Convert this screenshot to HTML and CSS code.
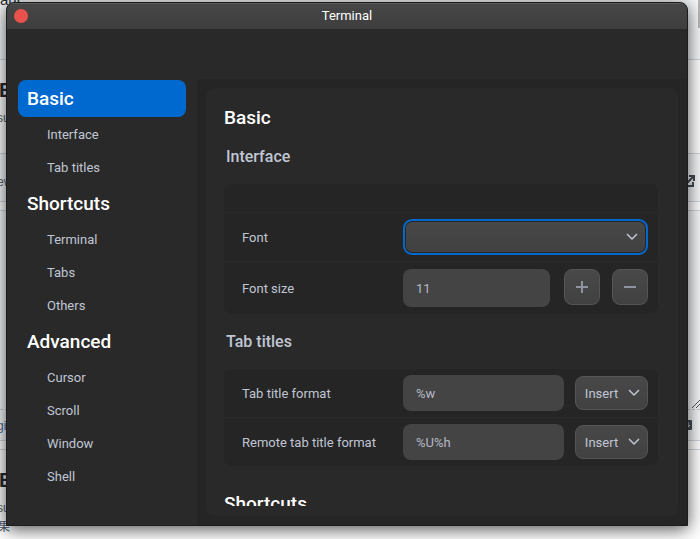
FILE: index.html
```html
<!DOCTYPE html>
<html lang="en">
<head>
  <meta charset="UTF-8">
  <meta name="viewport" content="width=device-width, initial-scale=1.0">
  <title>Terminal</title>
  <link rel="stylesheet" href="styles.css">
</head>
<body>
  <!-- Page behind the window -->
  <div class="desktop" aria-hidden="true">
    <div class="band band-top"><span class="peek peek-tab">aui</span></div>
    <div class="band band-title">
      <span class="peek peek-heading">E</span>
      <span class="peek peek-meta">su</span>
    </div>
    <div class="band band-bar">
      <span class="peek peek-link">ew</span>
      <svg class="peek-icon" width="10" height="12" viewBox="0 0 10 12" fill="none" stroke="#444c56" stroke-width="2">
        <path d="M3 1h5v5M8 1L1 8M0 11h7V7"/>
      </svg>
    </div>
    <div class="editor">
      <div class="editor-text">
        <svg class="grip" width="8" height="8" viewBox="0 0 8 8" stroke="#555" stroke-width="1">
          <path d="M0 8L8 0M4 8L8 4"/>
        </svg>
      </div>
      <div class="editor-foot">
        <span class="peek peek-foot">gi</span>
        <svg class="foot-icon" width="12" height="10" viewBox="0 0 12 10">
          <rect width="12" height="10" rx="1" fill="#444c56"/>
          <path d="M8 2v5M6 5l2 2 2-2" fill="none" stroke="#dfe3e8"/>
        </svg>
      </div>
    </div>
    <div class="band band-next">
      <span class="peek peek-heading">E</span>
      <span class="peek peek-meta">su</span>
      <span class="peek peek-cjk">果</span>
    </div>
    <div class="scrollbar"></div>
  </div>

  <!-- Settings window -->
  <div class="window">
    <header class="titlebar">
      <button class="close" type="button" aria-label="Close"></button>
      <h1>Terminal</h1>
    </header>

    <div class="body">
      <nav class="sidebar">
        <a class="nav-group active" href="#basic">Basic</a>
        <a class="nav-item" href="#interface">Interface</a>
        <a class="nav-item" href="#tab-titles">Tab titles</a>
        <a class="nav-group" href="#shortcuts">Shortcuts</a>
        <a class="nav-item" href="#terminal">Terminal</a>
        <a class="nav-item" href="#tabs">Tabs</a>
        <a class="nav-item" href="#others">Others</a>
        <a class="nav-group" href="#advanced">Advanced</a>
        <a class="nav-item" href="#cursor">Cursor</a>
        <a class="nav-item" href="#scroll">Scroll</a>
        <a class="nav-item" href="#window">Window</a>
        <a class="nav-item" href="#shell">Shell</a>
      </nav>

      <main class="content">
        <div class="panel">
          <div class="panel-scroll">
            <h2 id="basic">Basic</h2>

            <h3 id="interface">Interface</h3>
            <div class="group">
              <div class="row row-empty"></div>
              <div class="row">
                <label for="font">Font</label>
                <div class="controls">
                  <div class="select">
                    <select id="font"><option></option></select>
                    <svg class="chevron" width="12" height="8" viewBox="0 0 12 8"><path d="M1 1l5 5 5-5"/></svg>
                  </div>
                </div>
              </div>
              <div class="row row-size">
                <label for="size">Font size</label>
                <div class="controls spin">
                  <input id="size" type="text" value="11">
                  <button class="btn btn-step" type="button" aria-label="Increase">
                    <svg width="12" height="12" viewBox="0 0 12 12"><path d="M6 0v12M0 6h12"/></svg>
                  </button>
                  <button class="btn btn-step" type="button" aria-label="Decrease">
                    <svg width="12" height="12" viewBox="0 0 12 12"><path d="M0 6h12"/></svg>
                  </button>
                </div>
              </div>
            </div>

            <h3 id="tab-titles">Tab titles</h3>
            <div class="group">
              <div class="row">
                <label for="tab-format">Tab title format</label>
                <div class="controls">
                  <input id="tab-format" type="text" value="%w">
                  <button class="btn btn-insert" type="button">Insert
                    <svg class="chevron" width="12" height="8" viewBox="0 0 12 8"><path d="M1 1l5 5 5-5"/></svg>
                  </button>
                </div>
              </div>
              <div class="row">
                <label for="remote-format">Remote tab title format</label>
                <div class="controls">
                  <input id="remote-format" type="text" value="%U%h">
                  <button class="btn btn-insert" type="button">Insert
                    <svg class="chevron" width="12" height="8" viewBox="0 0 12 8"><path d="M1 1l5 5 5-5"/></svg>
                  </button>
                </div>
              </div>
            </div>

            <h2 id="shortcuts" class="next-section">Shortcuts</h2>
          </div>
        </div>
      </main>
    </div>
  </div>
</body>
</html>
```
FILE: styles.css
```css
* {
  box-sizing: border-box;
}
body {
  margin: 0;
  height: 100vh;
  position: relative;
  overflow: hidden;
  background: #fff;
  color: #c0c6d4;
  font-family: Roboto, sans-serif;
  font-size: 13px;
}

/* Page behind the window */
.desktop {
  position: absolute;
  inset: 0;
  display: flex;
  flex-direction: column;
  overflow: hidden;
  color: #57606a;
  font-family: "Liberation Sans", sans-serif;
  font-size: 12px;
  line-height: 16px;
}
.band {
  position: relative;
  flex: none;
  border-bottom: 1px solid #d0d7de;
}
.band-top {
  height: 60px;
  background: #f6f8fa;
}
.band-title {
  height: 94px;
}
.band-bar {
  height: 48px;
  background: #f6f8fa;
}
.band-next {
  flex: 1;
  margin-top: 8px;
  border-top: 1px solid #d0d7de;
  border-bottom: 0;
}
.editor {
  margin-top: 8px;
  border: 1px solid #d0d7de;
  border-width: 1px 0;
  background: #f6f8fa;
}
.editor-text {
  position: relative;
  height: 199px;
  border-bottom: 1px dashed #c4cad1;
}
.editor-foot {
  position: relative;
  height: 30px;
}
.peek {
  position: absolute;
  left: -3px;
}
.peek-tab {
  top: -8px;
  left: 0;
  color: #24292f;
  font-size: 15px;
}
.peek-heading {
  top: 20px;
  left: -1px;
  color: #24292f;
  font-size: 20px;
  font-weight: bold;
  line-height: 20px;
}
.peek-meta {
  top: 50px;
}
.peek-link {
  top: 20px;
}
.peek-foot {
  top: 8px;
  color: #4f6a94;
}
.peek-cjk {
  top: 68px;
  left: -2px;
  color: #46566e;
  font-family: "Noto Sans CJK SC", sans-serif;
}
.peek-icon {
  position: absolute;
  top: 21px;
  right: 4px;
}
.grip {
  position: absolute;
  right: 0;
  bottom: 1px;
}
.foot-icon {
  position: absolute;
  top: 10px;
  right: 8px;
}
.scrollbar {
  position: absolute;
  top: 0;
  right: 0;
  width: 2px;
  height: 28px;
  background: #b8b8b8;
}

/* Window */
.window {
  position: absolute;
  inset: 2px 12px 13px 6px;
  display: flex;
  flex-direction: column;
  overflow: hidden;
  border: 1px solid #1c1c1c;
  border-radius: 8px 8px 0 0;
  background: #292929;
  box-shadow: 0 3px 18px rgba(0, 0, 0, 0.7);
}
.titlebar {
  position: relative;
  flex: none;
  height: 26px;
  border-top: 1px solid #5a5a5a;
  background: linear-gradient(#464646, #3e3e3e);
}
.titlebar h1 {
  margin: 0;
  color: #fff;
  font-size: 13px;
  font-weight: 400;
  line-height: 24px;
  text-align: center;
}
.close {
  position: absolute;
  top: 5px;
  left: 7px;
  width: 14px;
  height: 14px;
  padding: 0;
  border: 0;
  border-radius: 50%;
  background: #e9524a;
}
.body {
  flex: 1;
  display: flex;
  min-height: 0;
  padding-top: 50px;
}

/* Sidebar */
.sidebar {
  flex: none;
  width: 190px;
  padding: 1px 11px;
}
.sidebar a {
  display: block;
  text-decoration: none;
}
.nav-group {
  margin: 1px 0;
  padding: 0 9px;
  border-radius: 8px;
  color: #fff;
  font-size: 19px;
  font-weight: 500;
  line-height: 37px;
}
.nav-group.active {
  margin-top: 0;
  background: #0069cf;
}
.nav-item {
  padding: 0 29px;
  color: #c0c6d4;
  line-height: 33px;
}

/* Settings */
.content {
  flex: 1;
  min-width: 0;
  padding: 9px;
  background: #252525;
}
.panel {
  height: 100%;
  padding: 0 20px 10px 18px;
  border-radius: 8px;
  background: #292929;
}
.panel-scroll {
  height: 100%;
  padding-top: 16px;
  overflow: hidden;
}
h2 {
  margin: 0;
  color: #fff;
  font-size: 19px;
  font-weight: 500;
  line-height: 28px;
}
h3 {
  margin: 14px 2px 17px;
  font-size: 16px;
  font-weight: 500;
  line-height: 21px;
}
.group + h3 {
  margin-top: 17px;
}
.next-section {
  margin-top: 24px;
}
.group {
  border-radius: 8px;
  background: #252525;
}
.row {
  display: flex;
  align-items: center;
  height: 48px;
  padding: 0 10px 0 18px;
}
.row + .row {
  height: 49px;
  border-top: 1px solid #292929;
}
.row.row-empty {
  height: 28px;
}
.row + .row-size {
  height: 53px;
}
.row label {
  flex: none;
  width: 161px;
}
.controls {
  flex: 1;
  display: flex;
  align-items: center;
  gap: 11px;
  min-width: 0;
}
.spin {
  align-items: flex-start;
  gap: 12px;
}
input {
  flex: 1;
  min-width: 0;
  height: 36px;
  padding: 0 13px;
  border: 0;
  border-radius: 8px;
  background: #444;
  color: #b4b9c6;
  font: inherit;
}
.spin input {
  height: 38px;
  margin-right: 2px;
}
.btn {
  display: flex;
  align-items: center;
  justify-content: center;
  border: 1px solid #555;
  border-radius: 8px;
  background: linear-gradient(#484848, #414141);
  color: #c0c6d4;
  font: inherit;
}
.btn-step {
  width: 36px;
  height: 36px;
  padding: 0;
}
.btn-insert {
  gap: 10px;
  width: 73px;
  height: 34px;
  padding: 0 0 0 2px;
}
.btn svg,
.chevron {
  fill: none;
  stroke: #c0c6d4;
}
.btn-step svg {
  stroke: #8d93a0;
  stroke-width: 2;
}
.btn svg.chevron,
.chevron {
  stroke-width: 1.5;
}
.select {
  position: relative;
  flex: 1;
}
.select select {
  display: block;
  width: 100%;
  height: 36px;
  padding: 0 32px 0 12px;
  appearance: none;
  border: 2px solid #0069cf;
  border-radius: 9px;
  outline: 0;
  background: linear-gradient(#484848, #414141);
  box-shadow: inset 0 0 0 1px #252525;
  color: #c0c6d4;
  font: inherit;
}
.select .chevron {
  position: absolute;
  top: 14px;
  right: 10px;
  pointer-events: none;
}
```
